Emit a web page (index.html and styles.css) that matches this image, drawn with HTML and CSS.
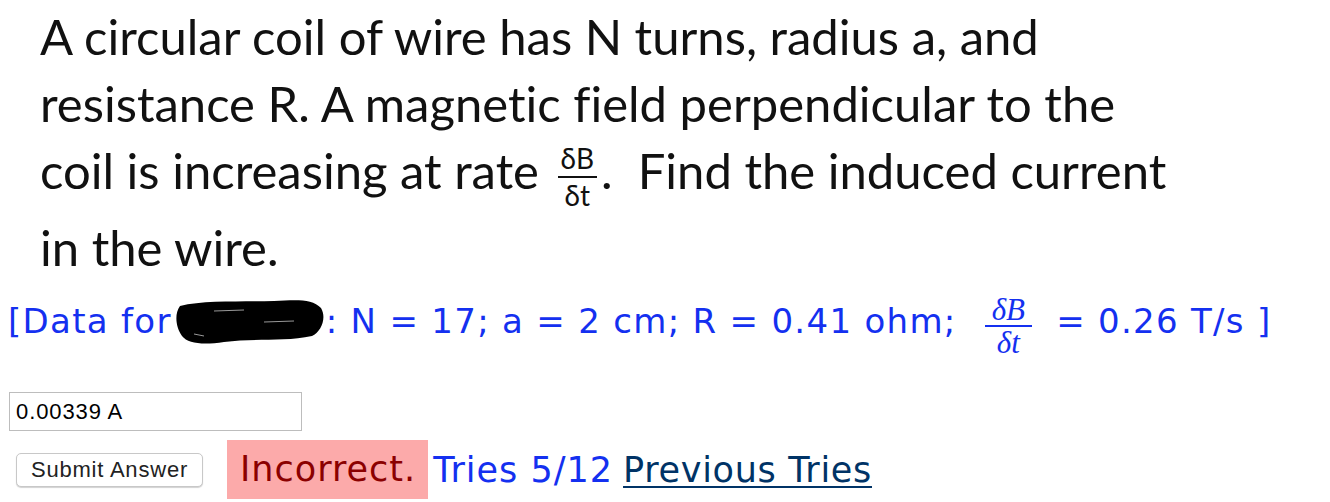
FILE: index.html
```html
<!DOCTYPE html>
<html>
<head>
<meta charset="utf-8">
<link rel="stylesheet" href="styles.css">
</head>
<body>
<div class="problem">
  <div class="pline">A circular coil of wire has N turns, radius a, and</div>
  <div class="pline">resistance R. A magnetic field perpendicular to the</div>
  <div class="pline pline-frac">coil is increasing at rate <span class="pfrac"><span class="pnum">δB</span><span class="pden">δt</span></span>.&nbsp; Find the induced current</div>
  <div class="pline">in the wire.</div>
</div>
<div class="data">[Data for<svg class="redact" width="152" height="50" viewBox="0 0 152 50"><path d="M6 10 C30 4 70 6 100 5 C120 4 138 2 147 12 C153 22 147 36 138 40 C110 46 80 42 50 46 C30 49 14 48 8 40 C2 32 0 18 6 10 Z" fill="#000"/><path d="M40 15 L70 14 M90 26 L120 25 M20 38 L30 40" stroke="#fff" stroke-width="1" fill="none" opacity="0.6"/></svg>: N = 17; a = 2 cm; R = 0.41 ohm; <span class="dfrac"><span class="dnum">δB</span><span class="dden">δt</span></span> = 0.26 T/s ]</div>
<div class="answer-row">
  <div class="answer-input">0.00339 A</div>
</div>
<div class="status-row">
  <span class="submit">Submit Answer</span>
  <span class="incorrect">Incorrect.</span>
  <span class="tries">Tries 5/12</span>
  <span class="prev">Previous Tries</span>
</div>
</body>
</html>
```
FILE: styles.css
```css
html, body { margin: 0; padding: 0; background: #fff; }
body { padding: 8px; }

.problem {
  margin-top: -5px;
  padding-left: 32px;
  font-family: Lato, "Open Sans", sans-serif;
  font-size: 49px;
  font-variant-ligatures: none;
  color: #111;
}
.pline { line-height: 67px; height: 67px; white-space: nowrap; }
.pline-frac { height: 77px; }

.pfrac {
  display: inline-flex;
  flex-direction: column;
  align-items: center;
  vertical-align: 20px;
  font-size: 28px;
  margin: 0 4px 0 6px;
}
.pnum { border-bottom: 2px solid #111; padding: 0 3px 4px; line-height: 27px; }
.pden { line-height: 27px; padding-top: 4px; }

.data {
  margin-top: 10px;
  font-family: "DejaVu Sans", Verdana, sans-serif;
  font-size: 34px;
  letter-spacing: 1.3px;
  line-height: 60px;
  height: 64px;
  color: #1430f0;
  white-space: nowrap;
}
.redact {
  vertical-align: -13px;
  margin-left: 2px;
  margin-right: 0;
}
.dfrac {
  display: inline-flex;
  flex-direction: column;
  align-items: center;
  vertical-align: 13px;
  font-family: "Liberation Serif", "Times New Roman", serif;
  font-style: italic;
  font-size: 31px;
  letter-spacing: 0;
  margin: 0 12px 0 16px;
}
.dnum { border-bottom: 2px solid #1430f0; padding: 0 7px; line-height: 30px; }
.dden { line-height: 31px; }

.answer-row { margin-top: 37px; }
.answer-input {
  box-sizing: border-box;
  width: 293px;
  height: 39px;
  border: 1px solid #bdbdbd;
  margin-left: 1px;
  padding-left: 6px;
  font-family: "Liberation Sans", Arial, sans-serif;
  font-size: 22px;
  letter-spacing: 0.9px;
  line-height: 37px;
  color: #000;
}

.status-row {
  margin-top: 9px;
  display: flex;
  align-items: center;
  font-family: "DejaVu Sans", Verdana, sans-serif;
  white-space: nowrap;
}
.submit {
  box-sizing: border-box;
  margin-left: 8px;
  width: 187px;
  height: 34px;
  border: 1px solid #c8c8c8;
  border-radius: 5px;
  box-shadow: 0 1px 1px rgba(0,0,0,0.18);
  background: #fff;
  font-family: "Liberation Sans", Arial, sans-serif;
  font-size: 22px;
  letter-spacing: 0.8px;
  color: #222;
  display: flex;
  align-items: center;
  justify-content: center;
}
.incorrect {
  margin-left: 24px;
  background: #fcaaaa;
  color: #8b0000;
  font-size: 35px;
  letter-spacing: 1px;
  height: 59px;
  line-height: 59px;
  padding: 0 12px 0 13px;
}
.tries {
  margin-left: 5px;
  color: #1430f0;
  font-size: 35px;
  letter-spacing: 1px;
}
.prev {
  margin-left: 10px;
  color: #003366;
  font-size: 35px;
  letter-spacing: 0.7px;
  text-decoration: underline;
  text-decoration-thickness: 2px;
  text-underline-offset: 4px;
}
```
